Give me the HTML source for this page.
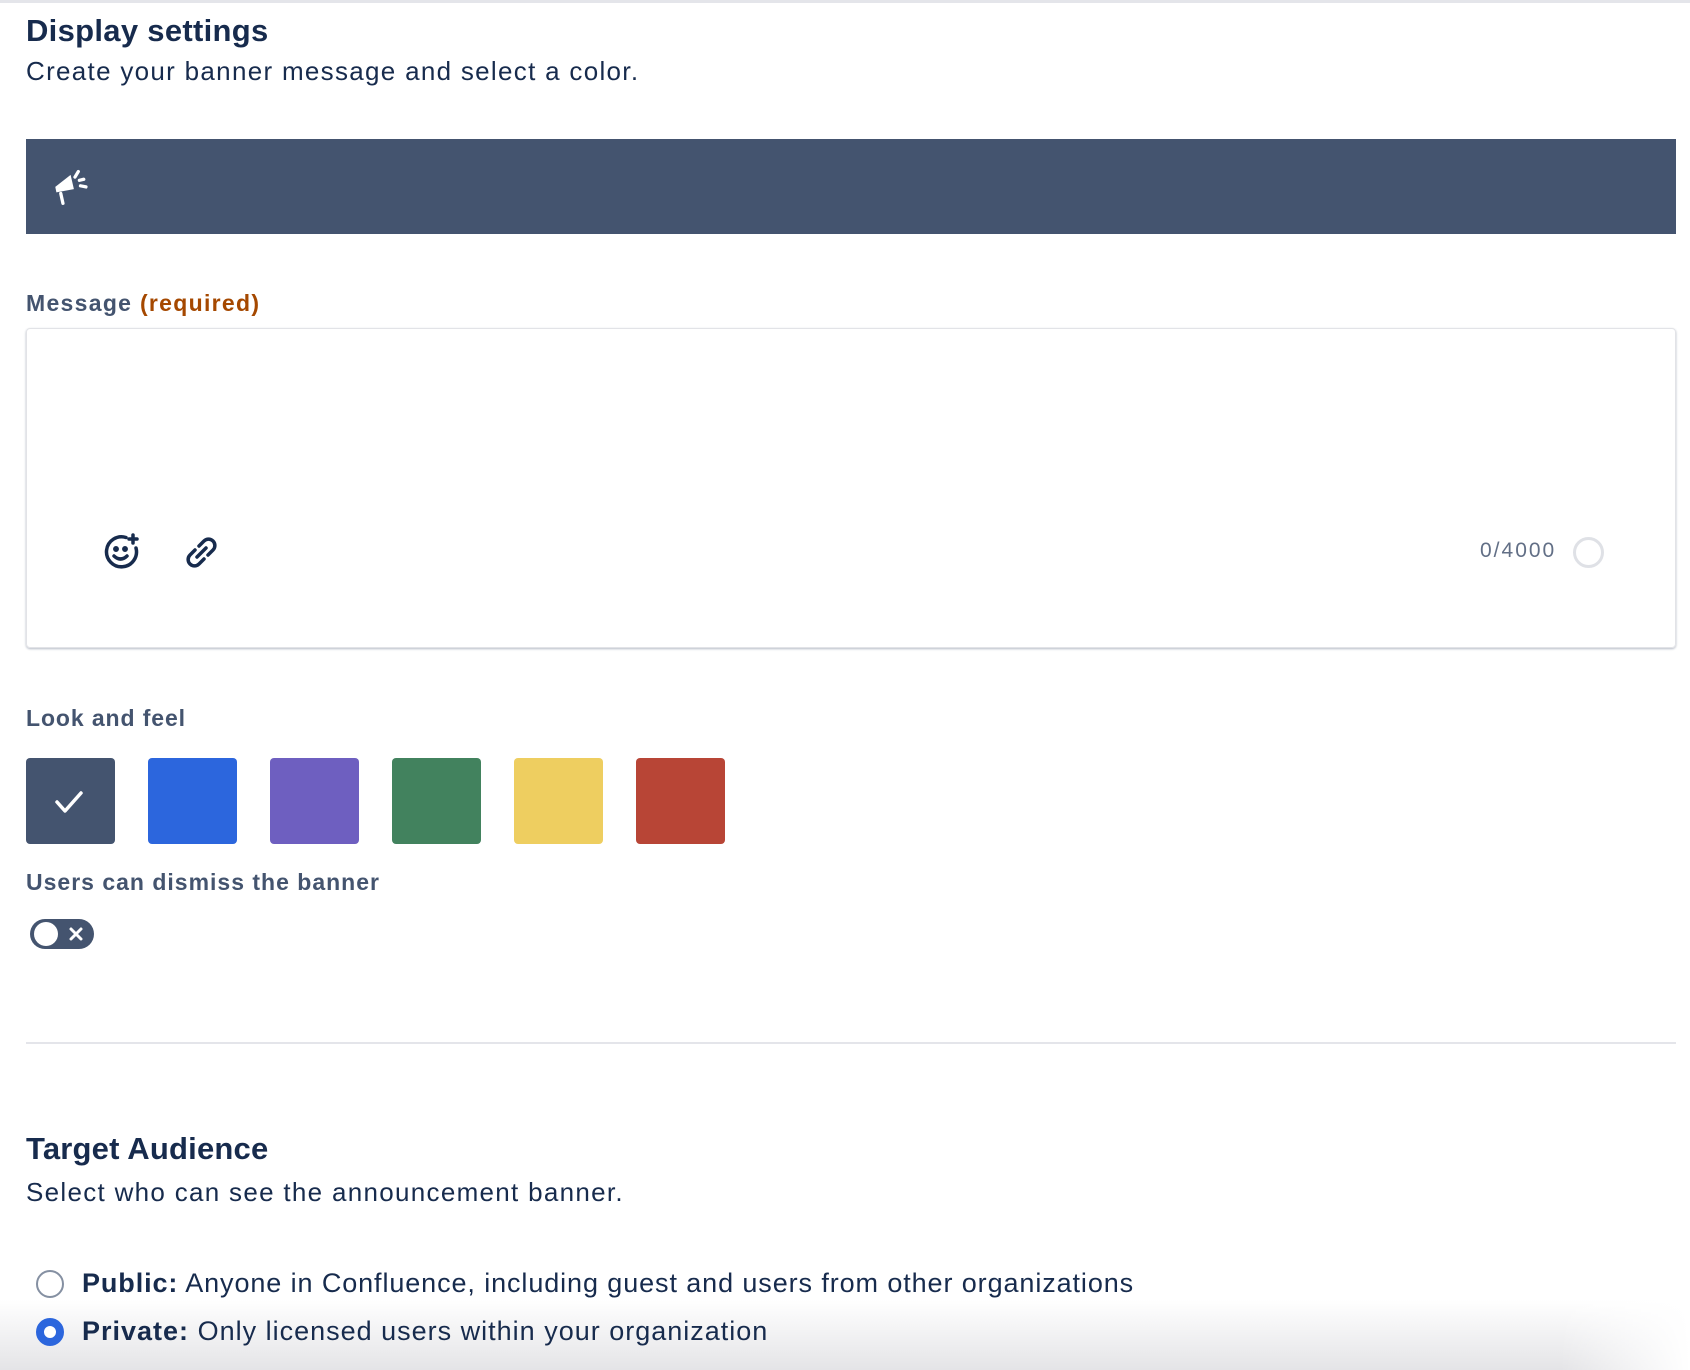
<!DOCTYPE html>
<html><head><meta charset="utf-8"><style>
*{margin:0;padding:0;box-sizing:border-box}
body{width:1690px;height:1370px;background:#fff;font-family:"Liberation Sans",sans-serif;color:#172B4D;position:relative;overflow:hidden}
.a{position:absolute;white-space:nowrap}
.sw{position:absolute;top:758px;width:89px;height:86px;border-radius:4px}
</style></head><body>
<div class="a" style="left:0;top:0;width:1690px;height:3px;background:#E4E5EA"></div>
<div class="a" style="left:26px;top:13px;font-size:31px;font-weight:bold;color:#172B4D;letter-spacing:0.3px">Display settings</div>
<div class="a" style="left:26px;top:56px;font-size:26px;color:#172B4D;letter-spacing:1.3px">Create your banner message and select a color.</div>
<div class="a" style="left:26px;top:139px;width:1650px;height:95px;background:#44546F"></div>
<svg class="a" style="left:52px;top:166px" width="46" height="44" viewBox="0 0 42 40">
<path d="M3 19 L17 8 L20 21 L4 24 Z" fill="#fff"/>
<path d="M8 25 L10 34" stroke="#fff" stroke-width="3" stroke-linecap="round"/>
<path d="M24 5 L21 10 M25 13 L29 12 M26 18 L31 19" stroke="#fff" stroke-width="3" stroke-linecap="round"/>
</svg>
<div class="a" style="left:26px;top:290px;font-size:23px;font-weight:bold;color:#44546F;letter-spacing:1.3px">Message <span style="color:#A54800">(required)</span></div>
<div class="a" style="left:26px;top:328px;width:1650px;height:320px;border:1px solid #E2E3E7;border-radius:4px;box-shadow:0 1px 2px rgba(9,30,66,.3)"></div>
<svg class="a" style="left:102px;top:532px" width="40" height="40" viewBox="0 0 40 40" fill="none" stroke="#172B4D" stroke-width="3.5" stroke-linecap="round">
<path d="M24 5.5 A15 15 0 1 0 34 16"/>
<circle cx="14" cy="17" r="1.2" fill="#172B4D"/><circle cx="23" cy="17" r="1.2" fill="#172B4D"/>
<path d="M12 24 Q18.5 30 25 24"/>
<path d="M31 3 V11 M27 7 H35"/>
</svg>
<svg class="a" style="left:182px;top:533px" width="40" height="40" viewBox="0 0 40 40" fill="none" stroke="#172B4D" stroke-width="3.5" stroke-linecap="round">
<path d="M17 13 L22 8 A5.5 5.5 0 0 1 31 17 L26 22"/>
<path d="M22 26 L17 31 A5.5 5.5 0 0 1 8 22 L13 17"/>
<path d="M15 24 L24 15"/>
</svg>
<div class="a" style="left:1480px;top:539px;font-size:21px;color:#626F86;letter-spacing:2px">0/4000</div>
<div class="a" style="left:1573px;top:537px;width:31px;height:31px;border:3px solid #DFE1E6;border-radius:50%"></div>
<div class="a" style="left:26px;top:705px;font-size:23px;font-weight:bold;color:#44546F;letter-spacing:0.9px">Look and feel</div>
<div class="sw" style="left:26px;background:#44546F"><svg width="89" height="86" viewBox="0 0 89 86"><path d="M31 44 L39 53 L55 35" fill="none" stroke="#fff" stroke-width="3.5" stroke-linecap="round" stroke-linejoin="round"/></svg></div>
<div class="sw" style="left:148px;background:#2C66DD"></div>
<div class="sw" style="left:270px;background:#6E5FC0"></div>
<div class="sw" style="left:392px;background:#42825E"></div>
<div class="sw" style="left:514px;background:#EECE60"></div>
<div class="sw" style="left:636px;background:#B84536"></div>
<div class="a" style="left:26px;top:869px;font-size:23px;font-weight:bold;color:#44546F;letter-spacing:1px">Users can dismiss the banner</div>
<div class="a" style="left:30px;top:919px;width:64px;height:30px;background:#44546F;border-radius:15px"></div>
<div class="a" style="left:34px;top:922px;width:24px;height:24px;background:#fff;border-radius:50%"></div>
<svg class="a" style="left:68px;top:926px" width="16" height="16" viewBox="0 0 16 16"><path d="M3 3 L13 13 M13 3 L3 13" stroke="#fff" stroke-width="3" stroke-linecap="round"/></svg>
<div class="a" style="left:26px;top:1042px;width:1650px;height:2px;background:#E4E5EA"></div>
<div class="a" style="left:26px;top:1131px;font-size:31px;font-weight:bold;color:#172B4D;letter-spacing:0.2px">Target Audience</div>
<div class="a" style="left:26px;top:1177px;font-size:26px;color:#172B4D;letter-spacing:1.3px">Select who can see the announcement banner.</div>
<div class="a" style="left:36px;top:1270px;width:28px;height:28px;border:2px solid #8590A2;border-radius:50%"></div>
<div class="a" style="left:82px;top:1268px;font-size:27px;color:#172B4D;letter-spacing:0.9px"><b>Public:</b> Anyone in Confluence, including guest and users from other organizations</div>
<div class="a" style="left:0;top:1300px;width:1690px;height:70px;background:linear-gradient(to bottom,rgba(255,255,255,0),rgba(225,225,228,.9));"></div>
<div class="a" style="left:1560px;top:1300px;width:130px;height:70px;background:linear-gradient(to right,rgba(255,255,255,0),#fff)"></div>
<div class="a" style="left:36px;top:1318px;width:28px;height:28px;border:8px solid #2C66DD;border-radius:50%;background:#fff"></div>
<div class="a" style="left:82px;top:1316px;font-size:27px;color:#172B4D;letter-spacing:1px"><b>Private:</b> Only licensed users within your organization</div>
</body></html>
